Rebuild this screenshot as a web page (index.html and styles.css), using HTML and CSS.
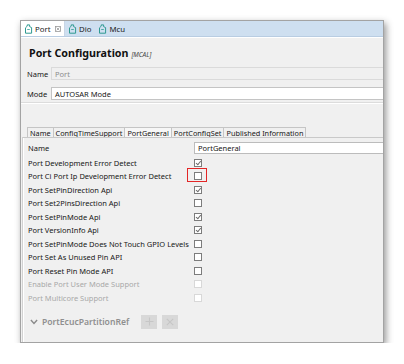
FILE: index.html
```html
<!DOCTYPE html>
<html>
<head>
<meta charset="utf-8">
<link rel="stylesheet" href="styles.css">
</head>
<body>
<div class="window">
  <div class="tabbar">
    <div class="tab active">
      <svg class="ico" width="9" height="10" viewBox="0 0 9 10"><path d="M1.5 9.2V3.8L3.2 2.2V0.9H5.6V2.6L7.6 3.6V9.2Z" fill="none" stroke="#2f9a92" stroke-width="1"/><path d="M3.2 5.5H5.8" stroke="#2f9a92" stroke-width="0.8"/></svg>
      <span>Port</span>
      <svg class="close" width="6" height="6" viewBox="0 0 6 6"><rect x="0.5" y="0.5" width="5" height="5" fill="none" stroke="#9a9a9a" stroke-width="0.8"/><path d="M1.6 1.6L4.4 4.4M4.4 1.6L1.6 4.4" stroke="#9a9a9a" stroke-width="0.8"/></svg>
    </div>
    <div class="tab">
      <svg class="ico" width="9" height="10" viewBox="0 0 9 10"><path d="M1.5 9.2V3.8L3.2 2.2V0.9H5.6V2.6L7.6 3.6V9.2Z" fill="none" stroke="#2f9a92" stroke-width="1"/><path d="M3.2 5.5H5.8" stroke="#2f9a92" stroke-width="0.8"/></svg>
      <span>Dio</span>
    </div>
    <div class="tab">
      <svg class="ico" width="9" height="10" viewBox="0 0 9 10"><path d="M1.5 9.2V3.8L3.2 2.2V0.9H5.6V2.6L7.6 3.6V9.2Z" fill="none" stroke="#2f9a92" stroke-width="1"/><path d="M3.2 5.5H5.8" stroke="#2f9a92" stroke-width="0.8"/></svg>
      <span>Mcu</span>
    </div>
  </div>
  <div class="editor">
    <div class="header"><span class="title">Port Configuration</span><span class="sub">[MCAL]</span></div>
    <div class="frow"><span class="flabel">Name</span><div class="field dis">Port</div></div>
    <div class="frow mode"><span class="flabel">Mode</span><div class="field">AUTOSAR Mode</div></div>
    <div class="sep"></div>
    <div class="tabs2">
      <div class="t2">Name</div>
      <div class="t2">ConfigTimeSupport</div>
      <div class="t2 sel">PortGeneral</div>
      <div class="t2">PortConfigSet</div>
      <div class="t2">Published Information</div>
    </div>
    <div class="panel">
      <div class="prow namerow"><span class="plabel">Name</span><div class="pfield">PortGeneral</div></div>
      <div class="prow"><span class="plabel">Port Development Error Detect</span><span class="cb on"></span></div>
      <div class="prow"><span class="plabel">Port Ci Port Ip Development Error Detect</span><span class="cb hl"></span></div>
      <div class="prow"><span class="plabel">Port SetPinDirection Api</span><span class="cb on"></span></div>
      <div class="prow"><span class="plabel">Port Set2PinsDirection Api</span><span class="cb"></span></div>
      <div class="prow"><span class="plabel">Port SetPinMode Api</span><span class="cb on"></span></div>
      <div class="prow"><span class="plabel">Port VersionInfo Api</span><span class="cb on"></span></div>
      <div class="prow"><span class="plabel">Port SetPinMode Does Not Touch GPIO Levels</span><span class="cb"></span></div>
      <div class="prow"><span class="plabel">Port Set As Unused Pin API</span><span class="cb"></span></div>
      <div class="prow"><span class="plabel">Port Reset Pin Mode API</span><span class="cb"></span></div>
      <div class="prow off"><span class="plabel">Enable Port User Mode Support</span><span class="cb dis"></span></div>
      <div class="prow off"><span class="plabel">Port Multicore Support</span><span class="cb dis"></span></div>
      <div class="partrow">
        <svg class="chev" width="8" height="6" viewBox="0 0 8 6"><path d="M0.9 1L4 4.4L7.1 1" fill="none" stroke="#8a8a8a" stroke-width="1.4"/></svg>
        <span class="ptext">PortEcucPartitionRef</span>
        <span class="btn"><svg width="9" height="9" viewBox="0 0 9 9"><path d="M4.5 0.5V8.5M0.5 4.5H8.5" stroke="#c6c6c6" stroke-width="1.1"/></svg></span>
        <span class="btn"><svg width="8" height="8" viewBox="0 0 8 8"><path d="M0.8 0.8L7.2 7.2M7.2 0.8L0.8 7.2" stroke="#c6c6c6" stroke-width="1.1"/></svg></span>
      </div>
    </div>
  </div>
</div>
</body>
</html>
```

FILE: styles.css
```css
html, body { margin: 0; padding: 0; background: #ffffff; }
body { font-family: "Noto Sans", "Open Sans", sans-serif; font-size: 7.5px; color: #161616; }

.window {
  margin: 20px 0 0 20px;
  width: 362px;
  height: 321px;
  border: 1px solid #a3a3a3;
  background: #f0f0f0;
  box-shadow: 2px 3px 7px rgba(0,0,0,0.42);
  overflow: hidden;
  display: flex;
  flex-direction: column;
}

.tabbar {
  height: 15px;
  background: #cedff0;
  border-bottom: 1px solid #b9cde2;
  display: flex;
  align-items: stretch;
  flex: none;
  font-size: 7.8px;
}
.tab {
  display: flex;
  align-items: center;
  padding: 0 4px 0 3px;
  gap: 2px;
  color: #222;
}
.tab.active {
  background: #ffffff;
  width: 37px;
  padding-right: 3px;
  border-right: 1px solid #c8d6e6;
}
.tab.active .close { margin-left: auto; }
.ico { flex: none; }

.editor {
  flex: 1;
  display: flex;
  flex-direction: column;
  border-top: 1px solid #ffffff;
}
.header {
  height: 29px;
  display: flex;
  align-items: center;
  padding-left: 8px;
  flex: none;
}
.title { font-weight: 700; font-size: 10.7px; color: #111; }
.sub { font-style: italic; font-size: 6.5px; color: #444; margin-left: 3px; margin-top: 3px; }

.frow {
  display: flex;
  align-items: center;
  height: 13px;
  padding-left: 6px;
  flex: none;
}
.frow.mode { margin-top: 7px; }
.flabel { width: 24px; flex: none; }
.field {
  flex: 1;
  height: 11px;
  margin-right: -6px;
  border: 1px solid #c4c4c4;
  background: #ffffff;
  display: flex;
  align-items: center;
  padding-left: 3px;
}
.field.dis { background: #f0f0f0; border-color: #dadada; color: #8c8c8c; }

.sep {
  margin-top: 2px;
  height: 0;
  border-top: 1px solid #dcdcdc;
  border-bottom: 1px solid #ffffff;
  flex: none;
}

.tabs2 {
  margin-top: 23px;
  margin-left: 6px;
  display: flex;
  height: 10px;
  flex: none;
}
.t2 {
  border: 1px solid #c5c5c5;
  border-bottom: none;
  border-left: none;
  padding: 0 2px;
  display: flex;
  align-items: center;
  background: #f0f0f0;
  font-size: 7.3px;
}
.t2:first-child { border-left: 1px solid #c5c5c5; }
.t2.sel { background: #f7f7f7; }

.panel {
  margin-left: 1px;
  margin-right: -6px;
  height: 201px;
  border-left: 1px solid #d2d2d2;
  border-top: 1px solid #c9c9c9;
  border-bottom: 1px solid #ffffff;
  box-shadow: inset 1px 0 0 #ffffff;
  padding: 4px 0 0 5px;
  display: flex;
  flex-direction: column;
  flex: none;
}
.prow {
  display: flex;
  align-items: center;
  height: 13.5px;
  flex: none;
}
.prow.namerow { height: 14px; align-items: flex-start; }
.plabel { width: 166px; flex: none; }
.prow.namerow .plabel { line-height: 12px; }
.pfield {
  flex: 1;
  height: 10px;
  border: 1px solid #bcbcbc;
  background: #ffffff;
  padding-left: 3px;
  line-height: 10px;
}
.prow.off .plabel { color: #a8a8a8; }

.cb {
  width: 6px;
  height: 6px;
  border: 1px solid #7c7c7c;
  background: #ffffff;
  position: relative;
  flex: none;
}
.cb.on::after {
  content: "";
  position: absolute;
  left: 1.5px;
  top: 0px;
  width: 2px;
  height: 3.6px;
  border-right: 1px solid #6b6b6b;
  border-bottom: 1px solid #6b6b6b;
  transform: rotate(40deg);
}
.cb.dis { border-color: #d8d8d8; }
.cb.hl::before {
  content: "";
  position: absolute;
  left: -8px;
  top: -5px;
  width: 18px;
  height: 12px;
  border: 1.5px solid #e32626;
}

.partrow {
  display: flex;
  align-items: center;
  height: 16px;
  margin-top: 9px;
  padding-left: 1px;
  flex: none;
}
.chev { flex: none; margin-left: 1px; }
.ptext { margin-left: 4px; width: 99px; color: #8f8f8f; font-size: 8.6px; font-weight: 600; }
.btn {
  width: 16px;
  height: 14px;
  background: #d8d8d8;
  display: flex;
  align-items: center;
  justify-content: center;
  margin-right: 5px;
}
```
